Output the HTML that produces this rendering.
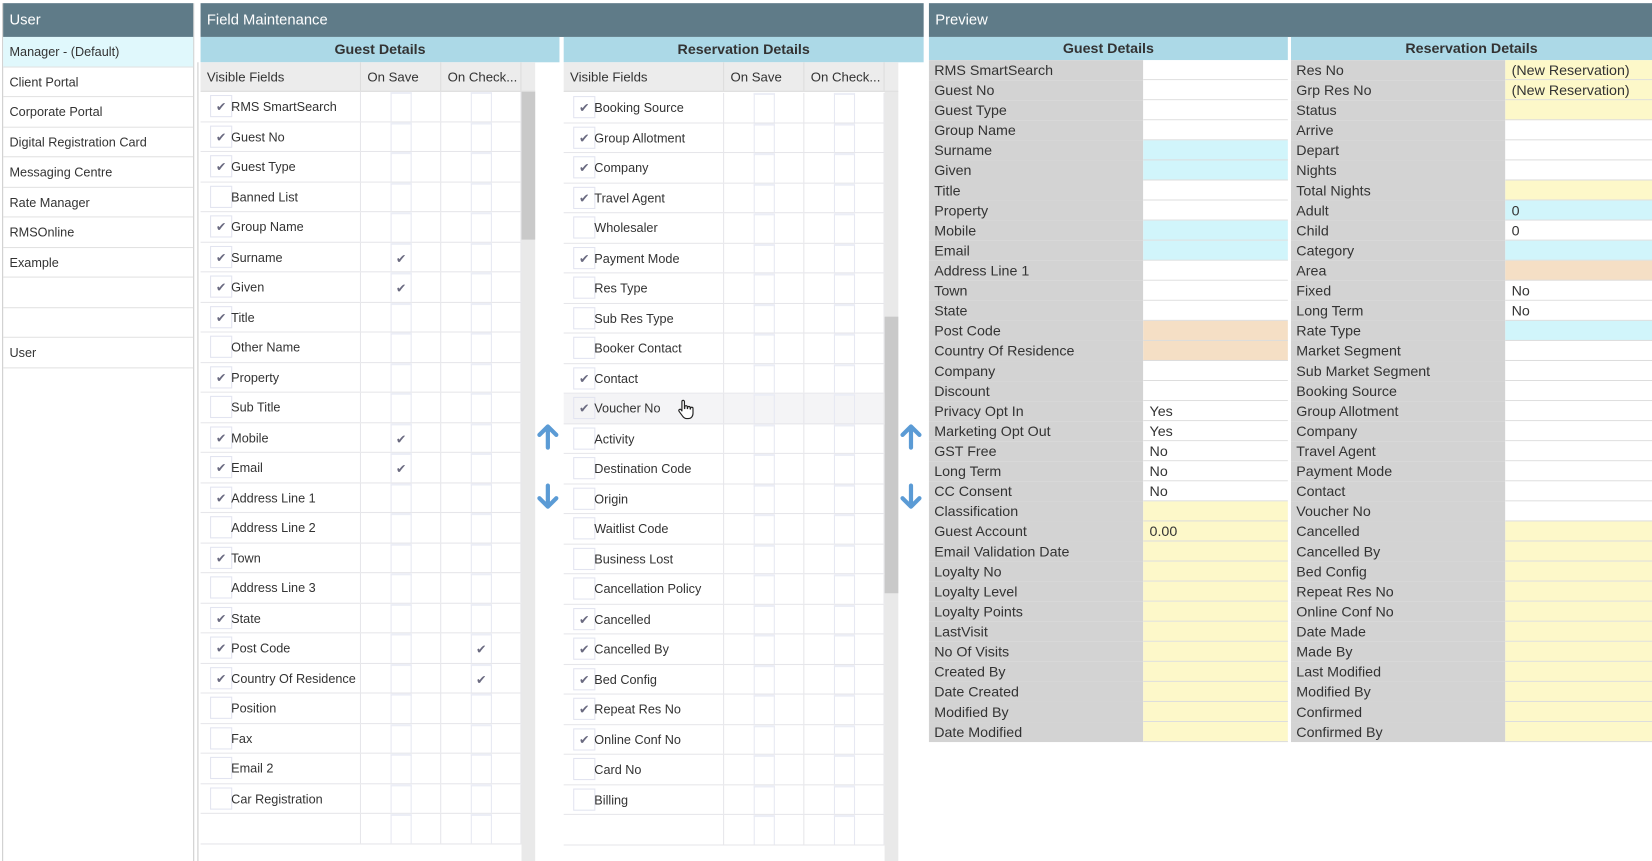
<!DOCTYPE html>
<html><head><meta charset="utf-8"><style>
*{box-sizing:border-box;margin:0;padding:0}
body{width:1652px;height:816px;background:#fff;font-family:"Liberation Sans",sans-serif;position:relative;overflow:hidden;color:#333}
#w{position:absolute;left:0;top:0;width:1565px;height:773px;transform:scale(1.05560);transform-origin:0 0}
.a{position:absolute}
.hd{background:#5f7b88;color:#fff;font-size:14px;line-height:30px;padding-left:6px;height:32px}
.sub{background:#acd9e7;color:#333;font-size:13.5px;font-weight:bold;text-align:center;line-height:24px;height:24px}
.ch{background:#ececec;font-size:12.5px;height:28px;line-height:28px;border-bottom:1px solid #ddd;display:flex}
.ch div{border-right:1px solid #ddd;padding-left:6px;white-space:nowrap;overflow:hidden}
.r{height:28.5px;display:flex;border-bottom:1px solid #e6e6ea;font-size:12px}
.r>div{border-right:1px solid #e6e6ea;position:relative;height:100%}
.v{width:152px}
.s{width:76px}
.cb{position:absolute;left:9px;top:3px;width:21px;height:21px;border:1px solid #e2e4f0;color:#6a6a80;font-size:12px;text-align:center;line-height:20px}
.t{position:absolute;left:29px;top:0;line-height:28px;white-space:nowrap}
.ib{position:absolute;left:28px;top:0;width:20px;height:100%;border-left:1px solid #e6e8f2;border-right:1px solid #e6e8f2;border-top:2px solid #eceef6;color:#6a6a80;font-size:12px;text-align:center;line-height:26px}
.ul div{height:28.5px;border-bottom:1px solid #e2e2e2;font-size:12px;line-height:28px;padding-left:6px}
.pr{display:flex;height:19px;font-size:13.5px;line-height:19px}
.pr .l{width:203px;background:#d3d3d3;padding-left:5px;white-space:nowrap}
.pr .x{flex:1;border-bottom:1px solid #ddd;padding-left:6px;background:#fff;white-space:nowrap;overflow:hidden}
.pr .c{background:#d1f5fb}.pr .p{background:#f5dfc5}.pr .y{background:#fdf8c9}
.sb{background:#e9e9e9;width:13px}
</style></head><body><div id="w">
<div class="a" style="left:2px;top:3px;width:182px;height:813px;border-right:1px solid #ccc;border-left:1px solid #ccc">
<div class="hd">User</div>
<div class="ul">
<div style="background:#e0f8fc">Manager - (Default)</div>
<div>Client Portal</div><div>Corporate Portal</div><div>Digital Registration Card</div><div>Messaging Centre</div><div>Rate Manager</div><div>RMSOnline</div><div>Example</div><div></div><div></div><div>User</div>
</div></div>

<div class="a hd" style="left:190px;top:3px;width:685px">Field Maintenance</div>
<div class="a sub" style="left:190px;top:35px;width:340px">Guest Details</div>
<div class="a sub" style="left:534px;top:35px;width:341px">Reservation Details</div>
<div class="a" style="left:187px;top:59px;width:1px;height:757px;background:#ccc"></div>

<div class="a" style="left:190px;top:59px;width:317px">
<div class="ch"><div style="width:152px">Visible Fields</div><div style="width:76px">On Save</div><div style="width:76px">On Check...</div><div style="width:13px;border:0"></div></div>
</div>
<div class="a sb" style="left:494px;top:87px;height:729px"></div>
<div class="a" style="left:494px;top:87px;width:13px;height:140px;background:#c9c9c9"></div>
<div class="a" style="left:190px;top:87px;width:304px">
<div class="r"><div class="v"><span class="cb">✔</span><span class="t">RMS SmartSearch</span></div><div class="s"><span class="ib"></span></div><div class="s"><span class="ib"></span></div></div>
<div class="r"><div class="v"><span class="cb">✔</span><span class="t">Guest No</span></div><div class="s"><span class="ib"></span></div><div class="s"><span class="ib"></span></div></div>
<div class="r"><div class="v"><span class="cb">✔</span><span class="t">Guest Type</span></div><div class="s"><span class="ib"></span></div><div class="s"><span class="ib"></span></div></div>
<div class="r"><div class="v"><span class="cb"></span><span class="t">Banned List</span></div><div class="s"><span class="ib"></span></div><div class="s"><span class="ib"></span></div></div>
<div class="r"><div class="v"><span class="cb">✔</span><span class="t">Group Name</span></div><div class="s"><span class="ib"></span></div><div class="s"><span class="ib"></span></div></div>
<div class="r"><div class="v"><span class="cb">✔</span><span class="t">Surname</span></div><div class="s"><span class="ib">✔</span></div><div class="s"><span class="ib"></span></div></div>
<div class="r"><div class="v"><span class="cb">✔</span><span class="t">Given</span></div><div class="s"><span class="ib">✔</span></div><div class="s"><span class="ib"></span></div></div>
<div class="r"><div class="v"><span class="cb">✔</span><span class="t">Title</span></div><div class="s"><span class="ib"></span></div><div class="s"><span class="ib"></span></div></div>
<div class="r"><div class="v"><span class="cb"></span><span class="t">Other Name</span></div><div class="s"><span class="ib"></span></div><div class="s"><span class="ib"></span></div></div>
<div class="r"><div class="v"><span class="cb">✔</span><span class="t">Property</span></div><div class="s"><span class="ib"></span></div><div class="s"><span class="ib"></span></div></div>
<div class="r"><div class="v"><span class="cb"></span><span class="t">Sub Title</span></div><div class="s"><span class="ib"></span></div><div class="s"><span class="ib"></span></div></div>
<div class="r"><div class="v"><span class="cb">✔</span><span class="t">Mobile</span></div><div class="s"><span class="ib">✔</span></div><div class="s"><span class="ib"></span></div></div>
<div class="r"><div class="v"><span class="cb">✔</span><span class="t">Email</span></div><div class="s"><span class="ib">✔</span></div><div class="s"><span class="ib"></span></div></div>
<div class="r"><div class="v"><span class="cb">✔</span><span class="t">Address Line 1</span></div><div class="s"><span class="ib"></span></div><div class="s"><span class="ib"></span></div></div>
<div class="r"><div class="v"><span class="cb"></span><span class="t">Address Line 2</span></div><div class="s"><span class="ib"></span></div><div class="s"><span class="ib"></span></div></div>
<div class="r"><div class="v"><span class="cb">✔</span><span class="t">Town</span></div><div class="s"><span class="ib"></span></div><div class="s"><span class="ib"></span></div></div>
<div class="r"><div class="v"><span class="cb"></span><span class="t">Address Line 3</span></div><div class="s"><span class="ib"></span></div><div class="s"><span class="ib"></span></div></div>
<div class="r"><div class="v"><span class="cb">✔</span><span class="t">State</span></div><div class="s"><span class="ib"></span></div><div class="s"><span class="ib"></span></div></div>
<div class="r"><div class="v"><span class="cb">✔</span><span class="t">Post Code</span></div><div class="s"><span class="ib"></span></div><div class="s"><span class="ib">✔</span></div></div>
<div class="r"><div class="v"><span class="cb">✔</span><span class="t">Country Of Residence</span></div><div class="s"><span class="ib"></span></div><div class="s"><span class="ib">✔</span></div></div>
<div class="r"><div class="v"><span class="cb"></span><span class="t">Position</span></div><div class="s"><span class="ib"></span></div><div class="s"><span class="ib"></span></div></div>
<div class="r"><div class="v"><span class="cb"></span><span class="t">Fax</span></div><div class="s"><span class="ib"></span></div><div class="s"><span class="ib"></span></div></div>
<div class="r"><div class="v"><span class="cb"></span><span class="t">Email 2</span></div><div class="s"><span class="ib"></span></div><div class="s"><span class="ib"></span></div></div>
<div class="r"><div class="v"><span class="cb"></span><span class="t">Car Registration</span></div><div class="s"><span class="ib"></span></div><div class="s"><span class="ib"></span></div></div>
<div class="r"><div class="v"></div><div class="s"><span class="ib"></span></div><div class="s"><span class="ib"></span></div></div>
</div>

<svg class="a" style="left:508px;top:400px" width="22" height="84" viewBox="0 0 22 84" fill="none" stroke="#5b9bd5" stroke-width="4" stroke-linecap="round" stroke-linejoin="round"><path d="M11 4V24M3 12L11 4L19 12"/><path d="M11 60V80M3 72L11 80L19 72"/></svg>
<svg class="a" style="left:852px;top:400px" width="22" height="84" viewBox="0 0 22 84" fill="none" stroke="#5b9bd5" stroke-width="4" stroke-linecap="round" stroke-linejoin="round"><path d="M11 4V24M3 12L11 4L19 12"/><path d="M11 60V80M3 72L11 80L19 72"/></svg>

<div class="a" style="left:534px;top:59px;width:317px">
<div class="ch"><div style="width:152px">Visible Fields</div><div style="width:76px">On Save</div><div style="width:76px">On Check...</div><div style="width:13px;border:0"></div></div>
</div>
<div class="a sb" style="left:838px;top:87px;height:729px"></div>
<div class="a" style="left:838px;top:300px;width:13px;height:262px;background:#c9c9c9"></div>
<div class="a" style="left:534px;top:88px;width:304px">
<div class="r"><div class="v"><span class="cb">✔</span><span class="t">Booking Source</span></div><div class="s"><span class="ib"></span></div><div class="s"><span class="ib"></span></div></div>
<div class="r"><div class="v"><span class="cb">✔</span><span class="t">Group Allotment</span></div><div class="s"><span class="ib"></span></div><div class="s"><span class="ib"></span></div></div>
<div class="r"><div class="v"><span class="cb">✔</span><span class="t">Company</span></div><div class="s"><span class="ib"></span></div><div class="s"><span class="ib"></span></div></div>
<div class="r"><div class="v"><span class="cb">✔</span><span class="t">Travel Agent</span></div><div class="s"><span class="ib"></span></div><div class="s"><span class="ib"></span></div></div>
<div class="r"><div class="v"><span class="cb"></span><span class="t">Wholesaler</span></div><div class="s"><span class="ib"></span></div><div class="s"><span class="ib"></span></div></div>
<div class="r"><div class="v"><span class="cb">✔</span><span class="t">Payment Mode</span></div><div class="s"><span class="ib"></span></div><div class="s"><span class="ib"></span></div></div>
<div class="r"><div class="v"><span class="cb"></span><span class="t">Res Type</span></div><div class="s"><span class="ib"></span></div><div class="s"><span class="ib"></span></div></div>
<div class="r"><div class="v"><span class="cb"></span><span class="t">Sub Res Type</span></div><div class="s"><span class="ib"></span></div><div class="s"><span class="ib"></span></div></div>
<div class="r"><div class="v"><span class="cb"></span><span class="t">Booker Contact</span></div><div class="s"><span class="ib"></span></div><div class="s"><span class="ib"></span></div></div>
<div class="r"><div class="v"><span class="cb">✔</span><span class="t">Contact</span></div><div class="s"><span class="ib"></span></div><div class="s"><span class="ib"></span></div></div>
<div class="r" style="background:#f4f4f6"><div class="v"><span class="cb">✔</span><span class="t">Voucher No</span><svg class="a" style="left:108px;top:5px" width="16" height="20" viewBox="0 0 16 20" fill="#fff" stroke="#222" stroke-width="1.1" stroke-linejoin="round"><path d="M4 2.5a1.2 1.2 0 0 1 2.4 0V9h.3V7.5a1.2 1.2 0 0 1 2.4 0V9h.3V8.3a1.2 1.2 0 0 1 2.4 0V9.5h.3V9a1.2 1.2 0 0 1 2.4 0v4.5c0 3-1.8 5-4.5 5H8.5c-2 0-3-1-4-2.5L1.2 11.5a1.2 1.2 0 0 1 2-1.3L4 11.3Z"/></svg></div><div class="s"><span class="ib"></span></div><div class="s"><span class="ib"></span></div></div>
<div class="r"><div class="v"><span class="cb"></span><span class="t">Activity</span></div><div class="s"><span class="ib"></span></div><div class="s"><span class="ib"></span></div></div>
<div class="r"><div class="v"><span class="cb"></span><span class="t">Destination Code</span></div><div class="s"><span class="ib"></span></div><div class="s"><span class="ib"></span></div></div>
<div class="r"><div class="v"><span class="cb"></span><span class="t">Origin</span></div><div class="s"><span class="ib"></span></div><div class="s"><span class="ib"></span></div></div>
<div class="r"><div class="v"><span class="cb"></span><span class="t">Waitlist Code</span></div><div class="s"><span class="ib"></span></div><div class="s"><span class="ib"></span></div></div>
<div class="r"><div class="v"><span class="cb"></span><span class="t">Business Lost</span></div><div class="s"><span class="ib"></span></div><div class="s"><span class="ib"></span></div></div>
<div class="r"><div class="v"><span class="cb"></span><span class="t">Cancellation Policy</span></div><div class="s"><span class="ib"></span></div><div class="s"><span class="ib"></span></div></div>
<div class="r"><div class="v"><span class="cb">✔</span><span class="t">Cancelled</span></div><div class="s"><span class="ib"></span></div><div class="s"><span class="ib"></span></div></div>
<div class="r"><div class="v"><span class="cb">✔</span><span class="t">Cancelled By</span></div><div class="s"><span class="ib"></span></div><div class="s"><span class="ib"></span></div></div>
<div class="r"><div class="v"><span class="cb">✔</span><span class="t">Bed Config</span></div><div class="s"><span class="ib"></span></div><div class="s"><span class="ib"></span></div></div>
<div class="r"><div class="v"><span class="cb">✔</span><span class="t">Repeat Res No</span></div><div class="s"><span class="ib"></span></div><div class="s"><span class="ib"></span></div></div>
<div class="r"><div class="v"><span class="cb">✔</span><span class="t">Online Conf No</span></div><div class="s"><span class="ib"></span></div><div class="s"><span class="ib"></span></div></div>
<div class="r"><div class="v"><span class="cb"></span><span class="t">Card No</span></div><div class="s"><span class="ib"></span></div><div class="s"><span class="ib"></span></div></div>
<div class="r"><div class="v"><span class="cb"></span><span class="t">Billing</span></div><div class="s"><span class="ib"></span></div><div class="s"><span class="ib"></span></div></div>
<div class="r"><div class="v"></div><div class="s"><span class="ib"></span></div><div class="s"><span class="ib"></span></div></div>
</div>

<div class="a hd" style="left:880px;top:3px;width:685px">Preview</div>
<div class="a sub" style="left:880px;top:35px;width:340px;height:22px;line-height:22px">Guest Details</div>
<div class="a sub" style="left:1223px;top:35px;width:342px;height:22px;line-height:22px">Reservation Details</div>
<div class="a" style="left:880px;top:57px;width:340px">
<div class="pr"><div class="l">RMS SmartSearch</div><div class="x"></div></div>
<div class="pr"><div class="l">Guest No</div><div class="x"></div></div>
<div class="pr"><div class="l">Guest Type</div><div class="x"></div></div>
<div class="pr"><div class="l">Group Name</div><div class="x"></div></div>
<div class="pr"><div class="l">Surname</div><div class="x c"></div></div>
<div class="pr"><div class="l">Given</div><div class="x c"></div></div>
<div class="pr"><div class="l">Title</div><div class="x"></div></div>
<div class="pr"><div class="l">Property</div><div class="x"></div></div>
<div class="pr"><div class="l">Mobile</div><div class="x c"></div></div>
<div class="pr"><div class="l">Email</div><div class="x c"></div></div>
<div class="pr"><div class="l">Address Line 1</div><div class="x"></div></div>
<div class="pr"><div class="l">Town</div><div class="x"></div></div>
<div class="pr"><div class="l">State</div><div class="x"></div></div>
<div class="pr"><div class="l">Post Code</div><div class="x p"></div></div>
<div class="pr"><div class="l">Country Of Residence</div><div class="x p"></div></div>
<div class="pr"><div class="l">Company</div><div class="x"></div></div>
<div class="pr"><div class="l">Discount</div><div class="x"></div></div>
<div class="pr"><div class="l">Privacy Opt In</div><div class="x">Yes</div></div>
<div class="pr"><div class="l">Marketing Opt Out</div><div class="x">Yes</div></div>
<div class="pr"><div class="l">GST Free</div><div class="x">No</div></div>
<div class="pr"><div class="l">Long Term</div><div class="x">No</div></div>
<div class="pr"><div class="l">CC Consent</div><div class="x">No</div></div>
<div class="pr"><div class="l">Classification</div><div class="x y"></div></div>
<div class="pr"><div class="l">Guest Account</div><div class="x y">0.00</div></div>
<div class="pr"><div class="l">Email Validation Date</div><div class="x y"></div></div>
<div class="pr"><div class="l">Loyalty No</div><div class="x y"></div></div>
<div class="pr"><div class="l">Loyalty Level</div><div class="x y"></div></div>
<div class="pr"><div class="l">Loyalty Points</div><div class="x y"></div></div>
<div class="pr"><div class="l">LastVisit</div><div class="x y"></div></div>
<div class="pr"><div class="l">No Of Visits</div><div class="x y"></div></div>
<div class="pr"><div class="l">Created By</div><div class="x y"></div></div>
<div class="pr"><div class="l">Date Created</div><div class="x y"></div></div>
<div class="pr"><div class="l">Modified By</div><div class="x y"></div></div>
<div class="pr"><div class="l">Date Modified</div><div class="x y"></div></div>
</div>
<div class="a" style="left:1223px;top:57px;width:342px">
<div class="pr"><div class="l">Res No</div><div class="x y">(New Reservation)</div></div>
<div class="pr"><div class="l">Grp Res No</div><div class="x y">(New Reservation)</div></div>
<div class="pr"><div class="l">Status</div><div class="x y"></div></div>
<div class="pr"><div class="l">Arrive</div><div class="x"></div></div>
<div class="pr"><div class="l">Depart</div><div class="x"></div></div>
<div class="pr"><div class="l">Nights</div><div class="x"></div></div>
<div class="pr"><div class="l">Total Nights</div><div class="x y"></div></div>
<div class="pr"><div class="l">Adult</div><div class="x c">0</div></div>
<div class="pr"><div class="l">Child</div><div class="x">0</div></div>
<div class="pr"><div class="l">Category</div><div class="x c"></div></div>
<div class="pr"><div class="l">Area</div><div class="x p"></div></div>
<div class="pr"><div class="l">Fixed</div><div class="x">No</div></div>
<div class="pr"><div class="l">Long Term</div><div class="x">No</div></div>
<div class="pr"><div class="l">Rate Type</div><div class="x c"></div></div>
<div class="pr"><div class="l">Market Segment</div><div class="x"></div></div>
<div class="pr"><div class="l">Sub Market Segment</div><div class="x"></div></div>
<div class="pr"><div class="l">Booking Source</div><div class="x"></div></div>
<div class="pr"><div class="l">Group Allotment</div><div class="x"></div></div>
<div class="pr"><div class="l">Company</div><div class="x"></div></div>
<div class="pr"><div class="l">Travel Agent</div><div class="x"></div></div>
<div class="pr"><div class="l">Payment Mode</div><div class="x"></div></div>
<div class="pr"><div class="l">Contact</div><div class="x"></div></div>
<div class="pr"><div class="l">Voucher No</div><div class="x"></div></div>
<div class="pr"><div class="l">Cancelled</div><div class="x y"></div></div>
<div class="pr"><div class="l">Cancelled By</div><div class="x y"></div></div>
<div class="pr"><div class="l">Bed Config</div><div class="x y"></div></div>
<div class="pr"><div class="l">Repeat Res No</div><div class="x y"></div></div>
<div class="pr"><div class="l">Online Conf No</div><div class="x y"></div></div>
<div class="pr"><div class="l">Date Made</div><div class="x y"></div></div>
<div class="pr"><div class="l">Made By</div><div class="x y"></div></div>
<div class="pr"><div class="l">Last Modified</div><div class="x y"></div></div>
<div class="pr"><div class="l">Modified By</div><div class="x y"></div></div>
<div class="pr"><div class="l">Confirmed</div><div class="x y"></div></div>
<div class="pr"><div class="l">Confirmed By</div><div class="x y"></div></div>
</div>
</div></body></html>
